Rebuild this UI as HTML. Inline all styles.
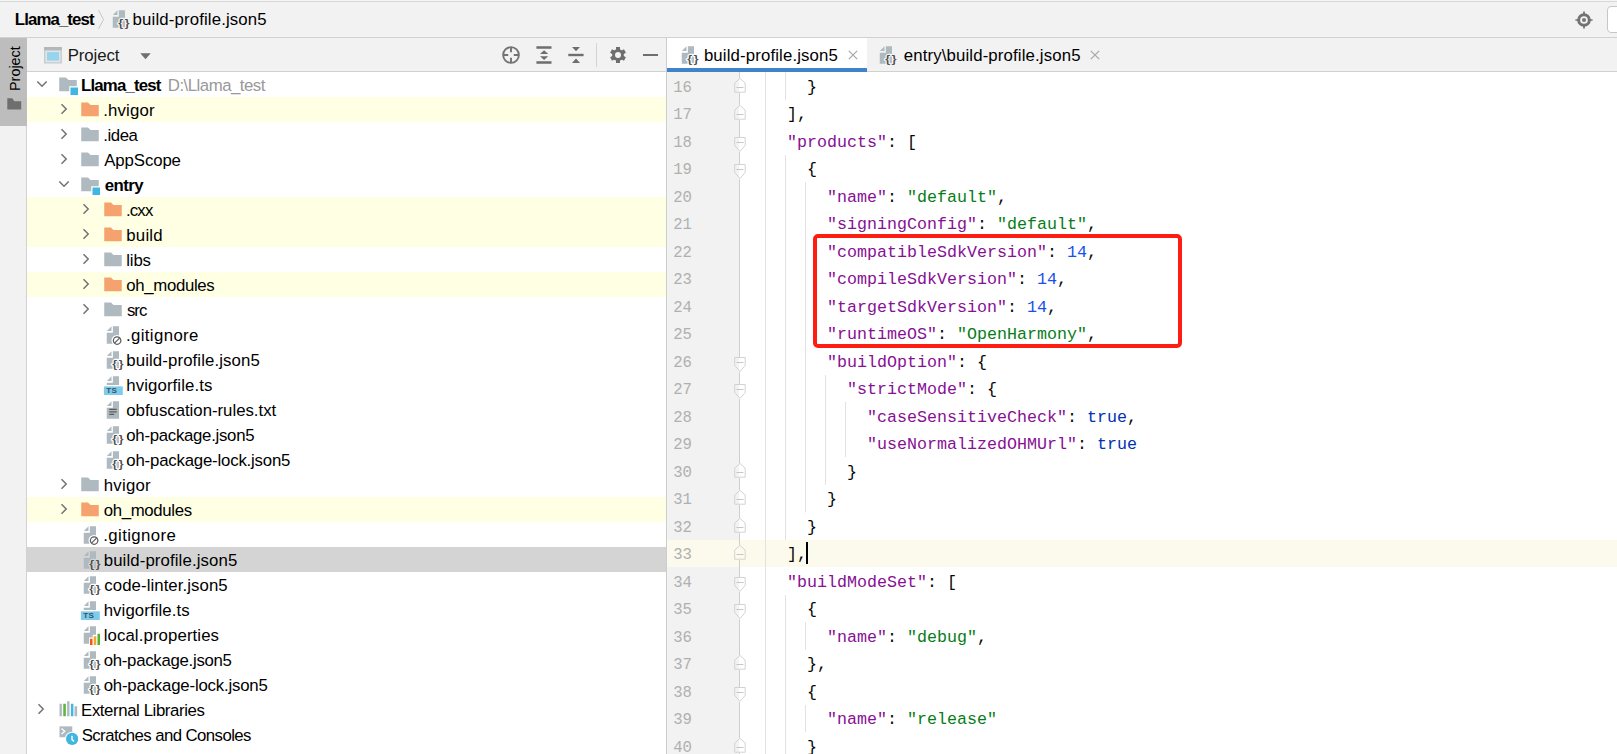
<!DOCTYPE html>
<html><head><meta charset="utf-8"><title>build-profile.json5</title>
<style>
html,body{margin:0;padding:0}
body{width:1617px;height:754px;overflow:hidden;position:relative;background:#fff;font-family:"Liberation Sans",sans-serif;color:#000}
.ab{position:absolute}
.rowbg{left:27px;width:639px;height:25px}
.tl{height:25px;line-height:25px;font-size:16.8px;white-space:pre;color:#000}
.b{font-weight:bold}
.ln{left:662px;width:30px;text-align:right;font:17px/27.5px "Liberation Mono",monospace;color:#b0b0b0;height:27.5px;transform:scaleX(.92);transform-origin:100% 50%}
.cl{font:16.667px/27.5px "Liberation Mono",monospace;white-space:pre;height:27.5px;color:#080808}
.k{color:#871094}.s{color:#067d17}.n{color:#1750eb}.w{color:#0033b3}
</style></head><body>
<!-- top nav bar -->
<div class="ab" style="left:0;top:0;width:1617px;height:38px;background:#f2f2f2"></div>
<div class="ab" style="left:0;top:0;width:1617px;height:1px;background:#f5f5f5"></div>
<div class="ab" style="left:0;top:1px;width:1617px;height:1px;background:#d8d8d8"></div>
<div class="ab" style="left:0;top:37px;width:1617px;height:1px;background:#d1d1d1"></div>
<div class="ab tl b" style="left:14.8px;top:6.7px;letter-spacing:-0.876px">Llama_test</div>
<svg class="ab" style="left:97px;top:9px" width="8" height="21" viewBox="0 0 8 21"><path d="M1.500 1l5 9.500-5 9.500" stroke="#c6c6c6" stroke-width="1" fill="none"/></svg>
<svg class="ab" style="left:108.8px;top:9.1px" width="22" height="22" viewBox="0 0 17.6 17.6"><path d="M7.900 1H12.800V15H3V6.200H7.900z" fill="#aeb9c0"/><path d="M6.800 1V4.700H3.100z" fill="#aeb9c0"/><g transform="translate(7.300 14.100) scale(1.250 1)"><text x="0" y="0" font-family="Liberation Sans, sans-serif" font-size="9.200" fill="#505050" stroke="#f2f2f2" stroke-width="2" stroke-linejoin="round" paint-order="stroke" letter-spacing="1.100">{}</text><text x="0" y="0" font-family="Liberation Sans, sans-serif" font-size="9.200" fill="#505050" letter-spacing="1.100">{}</text></g><ellipse cx="11.700" cy="11.300" rx="0.800" ry="2.300" fill="#b9c3c9"/></svg>
<div class="ab tl " style="left:132.6px;top:6.7px;letter-spacing:0.139px">build-profile.json5</div>
<svg class="ab" style="left:1573.900px;top:9.900px" width="20" height="20" viewBox="-10 -10 20 20"><circle r="5.350" fill="none" stroke="#737373" stroke-width="3"/><rect x="-1.800" y="-1.800" width="3.600" height="3.600" rx="0.800" fill="#737373"/><path d="M0 -8.600v3M0 5.600v3M-8.600 0h3M5.600 0h3" stroke="#737373" stroke-width="1.700"/></svg>
<div class="ab" style="left:1606.900px;top:6.100px;width:14px;height:24.600px;border:1.300px solid #c6c6c6;border-radius:4px;background:#fff"></div>

<!-- left strip -->
<div class="ab" style="left:0;top:38px;width:27px;height:716px;background:#f2f2f2"></div>
<div class="ab" style="left:26px;top:38px;width:1px;height:716px;background:#d1d1d1"></div>
<div class="ab" style="left:0;top:38px;width:26.600px;height:87.700px;background:#bdbdbd"></div>
<div class="ab" style="left:5px;top:90.600px;transform-origin:0 0;transform:rotate(-90deg);font-size:14.400px;line-height:20px;white-space:nowrap;letter-spacing:0.002px">Project</div>
<svg class="ab" style="left:7px;top:98px" width="15" height="12" viewBox="0 0 15 12"><path d="M.300 .300h5l2 3H14.200V11.600H.300z" fill="#6e6e6e"/></svg>

<!-- tool window header -->
<div class="ab" style="left:27px;top:38px;width:639px;height:33px;background:#f2f2f2"></div>
<div class="ab" style="left:27px;top:71px;width:639px;height:1px;background:#d1d1d1"></div>
<svg class="ab" style="left:44px;top:47.400px" width="19" height="17" viewBox="0 0 19 17"><rect x="0" y="0" width="17.900" height="16.500" fill="#c6cbd0"/><rect x="0" y="0" width="17.900" height="2.900" fill="#b0b8be"/><rect x="1.400" y="3.900" width="15.100" height="11.300" fill="#e2e6e9"/><rect x="3" y="5.100" width="12.100" height="8.500" fill="#98d4eb"/></svg>
<div class="ab tl " style="left:67.7px;top:43px;letter-spacing:-0.078px;color:#1a1a1a">Project</div>
<svg class="ab" style="left:139.500px;top:53px" width="12" height="7" viewBox="0 0 12 7"><path d="M.300 .300h10.400L5.500 6.300z" fill="#6e6e6e"/></svg>
<!-- toolbar icons -->
<svg class="ab" style="left:501px;top:44.850px" width="20" height="20" viewBox="0 0 20 20"><circle cx="10" cy="10" r="7.850" fill="none" stroke="#737373" stroke-width="1.900"/><path d="M10 2v5.200M10 12.800v5.200M2 10h5.200M12.800 10h5.200" stroke="#737373" stroke-width="1.900"/></svg>
<svg class="ab" style="left:534px;top:45px" width="20" height="20" viewBox="0 0 20 20"><path d="M2.400 2.500h15.100M2.400 17.500h15.100" stroke="#6e6e6e" stroke-width="2.500"/><path d="M6 9h8.200L10.100 5.200z M6 11.200h8.200l-4.100 3.700z" fill="#6e6e6e"/></svg>
<svg class="ab" style="left:566px;top:45px" width="20" height="20" viewBox="0 0 20 20"><path d="M2.300 10h15.300" stroke="#6e6e6e" stroke-width="2.400"/><path d="M6 2.100h8L10 6.300z M6 17.900h8L10 13.500z" fill="#6e6e6e"/></svg>
<div class="ab" style="left:596px;top:43px;width:1px;height:24px;background:#d3d3d3"></div>
<svg class="ab" style="left:608px;top:44.850px" width="20" height="20" viewBox="-10 -10 20 20"><g fill="#6e6e6e"><rect x="-2" y="-8" width="4" height="16"/><rect x="-2" y="-8" width="4" height="16" transform="rotate(60)"/><rect x="-2" y="-8" width="4" height="16" transform="rotate(120)"/></g><circle r="5.900" fill="#6e6e6e"/><circle r="3" fill="#f2f2f2"/></svg>
<div class="ab" style="left:642.700px;top:53.900px;width:15px;height:2.200px;background:#6e6e6e"></div>

<!-- tree -->
<svg class="ab" style="left:34.8px;top:79px" width="14" height="10" viewBox="-7 -5 14 10"><path d="M-4.700 -2.500L0 2.200 4.700-2.500" stroke="#727272" stroke-width="1.500" fill="none"/></svg>
<svg class="ab" style="left:57.7px;top:74.8px" width="20" height="20" viewBox="0 0 16 16"><path d="M1 2h5.4l2 2H15v9H1z" fill="#aeb9c0"/><rect x="9" y="9" width="7" height="7" fill="#fff"/><rect x="10" y="10" width="6" height="6" fill="#40b6e0"/></svg>
<div class="ab tl b" style="left:81.1px;top:73.1px;letter-spacing:-0.832px">Llama_test</div>
<div class="ab tl " style="left:167.8px;top:73.1px;letter-spacing:-0.497px;color:#999">D:\Llama_test</div>
<div class="ab rowbg" style="top:97px;background:#ffffe4"></div>
<svg class="ab" style="left:59px;top:102.3px" width="10" height="14" viewBox="-5 -7 10 14"><path d="M-2.500 -4.700L2.200 0-2.500 4.700" stroke="#727272" stroke-width="1.500" fill="none"/></svg>
<svg class="ab" style="left:80.3px;top:99.8px" width="20" height="20" viewBox="0 0 16 16"><path d="M1 2h5.4l2 2H15v9H1z" fill="#f5a26f"/></svg>
<div class="ab tl " style="left:103.3px;top:98.1px;letter-spacing:0.137px">.hvigor</div>
<svg class="ab" style="left:59px;top:127.3px" width="10" height="14" viewBox="-5 -7 10 14"><path d="M-2.500 -4.700L2.200 0-2.500 4.700" stroke="#727272" stroke-width="1.500" fill="none"/></svg>
<svg class="ab" style="left:80.3px;top:124.8px" width="20" height="20" viewBox="0 0 16 16"><path d="M1 2h5.4l2 2H15v9H1z" fill="#aeb9c0"/></svg>
<div class="ab tl " style="left:103.3px;top:123.1px;letter-spacing:-0.464px">.idea</div>
<svg class="ab" style="left:59px;top:152.3px" width="10" height="14" viewBox="-5 -7 10 14"><path d="M-2.500 -4.700L2.200 0-2.500 4.700" stroke="#727272" stroke-width="1.500" fill="none"/></svg>
<svg class="ab" style="left:80.3px;top:149.8px" width="20" height="20" viewBox="0 0 16 16"><path d="M1 2h5.4l2 2H15v9H1z" fill="#aeb9c0"/></svg>
<div class="ab tl " style="left:104.3px;top:148.1px;letter-spacing:-0.115px">AppScope</div>
<svg class="ab" style="left:57.4px;top:179px" width="14" height="10" viewBox="-7 -5 14 10"><path d="M-4.700 -2.500L0 2.200 4.700-2.500" stroke="#727272" stroke-width="1.500" fill="none"/></svg>
<svg class="ab" style="left:80.3px;top:174.8px" width="20" height="20" viewBox="0 0 16 16"><path d="M1 2h5.4l2 2H15v9H1z" fill="#aeb9c0"/><rect x="9" y="9" width="7" height="7" fill="#fff"/><rect x="10" y="10" width="6" height="6" fill="#40b6e0"/></svg>
<div class="ab tl b" style="left:104.7px;top:173.1px;letter-spacing:-0.526px">entry</div>
<div class="ab rowbg" style="top:197px;background:#ffffe4"></div>
<svg class="ab" style="left:80.9px;top:202.3px" width="10" height="14" viewBox="-5 -7 10 14"><path d="M-2.500 -4.700L2.200 0-2.500 4.700" stroke="#727272" stroke-width="1.500" fill="none"/></svg>
<svg class="ab" style="left:102.9px;top:199.8px" width="20" height="20" viewBox="0 0 16 16"><path d="M1 2h5.4l2 2H15v9H1z" fill="#f5a26f"/></svg>
<div class="ab tl " style="left:125.9px;top:198.1px;letter-spacing:-0.815px">.cxx</div>
<div class="ab rowbg" style="top:222px;background:#ffffe4"></div>
<svg class="ab" style="left:80.9px;top:227.3px" width="10" height="14" viewBox="-5 -7 10 14"><path d="M-2.500 -4.700L2.200 0-2.500 4.700" stroke="#727272" stroke-width="1.500" fill="none"/></svg>
<svg class="ab" style="left:102.9px;top:224.8px" width="20" height="20" viewBox="0 0 16 16"><path d="M1 2h5.4l2 2H15v9H1z" fill="#f5a26f"/></svg>
<div class="ab tl " style="left:126.3px;top:223.1px;letter-spacing:0.219px">build</div>
<svg class="ab" style="left:80.9px;top:252.3px" width="10" height="14" viewBox="-5 -7 10 14"><path d="M-2.500 -4.700L2.200 0-2.500 4.700" stroke="#727272" stroke-width="1.500" fill="none"/></svg>
<svg class="ab" style="left:102.9px;top:249.8px" width="20" height="20" viewBox="0 0 16 16"><path d="M1 2h5.4l2 2H15v9H1z" fill="#aeb9c0"/></svg>
<div class="ab tl " style="left:126.3px;top:248.1px;letter-spacing:-0.163px">libs</div>
<div class="ab rowbg" style="top:272px;background:#ffffe4"></div>
<svg class="ab" style="left:80.9px;top:277.3px" width="10" height="14" viewBox="-5 -7 10 14"><path d="M-2.500 -4.700L2.200 0-2.500 4.700" stroke="#727272" stroke-width="1.500" fill="none"/></svg>
<svg class="ab" style="left:102.9px;top:274.8px" width="20" height="20" viewBox="0 0 16 16"><path d="M1 2h5.4l2 2H15v9H1z" fill="#f5a26f"/></svg>
<div class="ab tl " style="left:126.3px;top:273.1px;letter-spacing:-0.338px">oh_modules</div>
<svg class="ab" style="left:80.9px;top:302.3px" width="10" height="14" viewBox="-5 -7 10 14"><path d="M-2.500 -4.700L2.200 0-2.500 4.700" stroke="#727272" stroke-width="1.500" fill="none"/></svg>
<svg class="ab" style="left:102.9px;top:299.8px" width="20" height="20" viewBox="0 0 16 16"><path d="M1 2h5.4l2 2H15v9H1z" fill="#aeb9c0"/></svg>
<div class="ab tl " style="left:126.9px;top:298.1px;letter-spacing:-0.989px">src</div>
<svg class="ab" style="left:102.9px;top:324.8px" width="20" height="20" viewBox="0 0 16 16"><path d="M7.900 1H12.800V15H3V6.200H7.900z" fill="#aeb9c0"/><path d="M6.800 1V4.700H3.100z" fill="#aeb9c0"/><circle cx="11.300" cy="12.400" r="4.500" fill="#fff"/><circle cx="11.300" cy="12.400" r="3" fill="none" stroke="#5a5a5a" stroke-width="1"/><path d="M9.200 14.500L13.400 10.300" stroke="#5a5a5a" stroke-width="1"/></svg>
<div class="ab tl " style="left:125.9px;top:323.1px;letter-spacing:0.389px">.gitignore</div>
<svg class="ab" style="left:102.9px;top:349.8px" width="22" height="22" viewBox="0 0 17.6 17.6"><path d="M7.900 1H12.800V15H3V6.200H7.900z" fill="#aeb9c0"/><path d="M6.800 1V4.700H3.100z" fill="#aeb9c0"/><g transform="translate(7.300 14.100) scale(1.250 1)"><text x="0" y="0" font-family="Liberation Sans, sans-serif" font-size="9.200" fill="#505050" stroke="#fff" stroke-width="2" stroke-linejoin="round" paint-order="stroke" letter-spacing="1.100">{}</text><text x="0" y="0" font-family="Liberation Sans, sans-serif" font-size="9.200" fill="#505050" letter-spacing="1.100">{}</text></g><ellipse cx="11.700" cy="11.300" rx="0.800" ry="2.300" fill="#b9c3c9"/></svg>
<div class="ab tl " style="left:126.3px;top:348.1px;letter-spacing:0.111px">build-profile.json5</div>
<svg class="ab" style="left:102.9px;top:374.8px" width="20" height="20" viewBox="0 0 16 16"><path d="M7.900 1H12.800V8H3V6.200H7.900z" fill="#aeb9c0"/><path d="M6.800 1V4.700H3.100z" fill="#aeb9c0"/><rect x="0.700" y="9.100" width="15.100" height="6.900" fill="#7fcbe9"/><text x="2.500" y="14.300" font-family="Liberation Sans, sans-serif" font-weight="bold" font-size="6.500" fill="#33576a" letter-spacing="0.300">TS</text></svg>
<div class="ab tl " style="left:126.3px;top:373.1px;letter-spacing:0.093px">hvigorfile.ts</div>
<svg class="ab" style="left:102.9px;top:399.8px" width="20" height="20" viewBox="0 0 16 16"><path d="M7.900 1H12.800V15H3V6.200H7.900z" fill="#aeb9c0"/><path d="M6.800 1V4.700H3.100z" fill="#aeb9c0"/><path d="M5 7.500h6M5 9.500h6M5 11.500h4" stroke="#5c5c5c" stroke-width="1"/></svg>
<div class="ab tl " style="left:126.3px;top:398.1px;letter-spacing:-0.015px">obfuscation-rules.txt</div>
<svg class="ab" style="left:102.9px;top:424.8px" width="22" height="22" viewBox="0 0 17.6 17.6"><path d="M7.900 1H12.800V15H3V6.200H7.900z" fill="#aeb9c0"/><path d="M6.800 1V4.700H3.100z" fill="#aeb9c0"/><g transform="translate(7.300 14.100) scale(1.250 1)"><text x="0" y="0" font-family="Liberation Sans, sans-serif" font-size="9.200" fill="#505050" stroke="#fff" stroke-width="2" stroke-linejoin="round" paint-order="stroke" letter-spacing="1.100">{}</text><text x="0" y="0" font-family="Liberation Sans, sans-serif" font-size="9.200" fill="#505050" letter-spacing="1.100">{}</text></g><ellipse cx="11.700" cy="11.300" rx="0.800" ry="2.300" fill="#b9c3c9"/></svg>
<div class="ab tl " style="left:126.3px;top:423.1px;letter-spacing:-0.283px">oh-package.json5</div>
<svg class="ab" style="left:102.9px;top:449.8px" width="22" height="22" viewBox="0 0 17.6 17.6"><path d="M7.900 1H12.800V15H3V6.200H7.900z" fill="#aeb9c0"/><path d="M6.800 1V4.700H3.100z" fill="#aeb9c0"/><g transform="translate(7.300 14.100) scale(1.250 1)"><text x="0" y="0" font-family="Liberation Sans, sans-serif" font-size="9.200" fill="#505050" stroke="#fff" stroke-width="2" stroke-linejoin="round" paint-order="stroke" letter-spacing="1.100">{}</text><text x="0" y="0" font-family="Liberation Sans, sans-serif" font-size="9.200" fill="#505050" letter-spacing="1.100">{}</text></g><ellipse cx="11.700" cy="11.300" rx="0.800" ry="2.300" fill="#b9c3c9"/></svg>
<div class="ab tl " style="left:126.3px;top:448.1px;letter-spacing:-0.189px">oh-package-lock.json5</div>
<svg class="ab" style="left:59px;top:477.3px" width="10" height="14" viewBox="-5 -7 10 14"><path d="M-2.500 -4.700L2.200 0-2.500 4.700" stroke="#727272" stroke-width="1.500" fill="none"/></svg>
<svg class="ab" style="left:80.3px;top:474.8px" width="20" height="20" viewBox="0 0 16 16"><path d="M1 2h5.4l2 2H15v9H1z" fill="#aeb9c0"/></svg>
<div class="ab tl " style="left:103.7px;top:473.1px;letter-spacing:0.256px">hvigor</div>
<div class="ab rowbg" style="top:497px;background:#ffffe4"></div>
<svg class="ab" style="left:59px;top:502.3px" width="10" height="14" viewBox="-5 -7 10 14"><path d="M-2.500 -4.700L2.200 0-2.500 4.700" stroke="#727272" stroke-width="1.500" fill="none"/></svg>
<svg class="ab" style="left:80.3px;top:499.8px" width="20" height="20" viewBox="0 0 16 16"><path d="M1 2h5.4l2 2H15v9H1z" fill="#f5a26f"/></svg>
<div class="ab tl " style="left:103.7px;top:498.1px;letter-spacing:-0.338px">oh_modules</div>
<svg class="ab" style="left:80.3px;top:524.8px" width="20" height="20" viewBox="0 0 16 16"><path d="M7.900 1H12.800V15H3V6.200H7.900z" fill="#aeb9c0"/><path d="M6.800 1V4.700H3.100z" fill="#aeb9c0"/><circle cx="11.300" cy="12.400" r="4.500" fill="#fff"/><circle cx="11.300" cy="12.400" r="3" fill="none" stroke="#5a5a5a" stroke-width="1"/><path d="M9.200 14.500L13.400 10.300" stroke="#5a5a5a" stroke-width="1"/></svg>
<div class="ab tl " style="left:103.3px;top:523.1px;letter-spacing:0.389px">.gitignore</div>
<div class="ab rowbg" style="top:547px;background:#d4d4d4"></div>
<svg class="ab" style="left:80.3px;top:549.8px" width="22" height="22" viewBox="0 0 17.6 17.6"><path d="M7.900 1H12.800V15H3V6.200H7.900z" fill="#aeb9c0"/><path d="M6.800 1V4.700H3.100z" fill="#aeb9c0"/><g transform="translate(7.300 14.100) scale(1.250 1)"><text x="0" y="0" font-family="Liberation Sans, sans-serif" font-size="9.200" fill="#505050" stroke="#d4d4d4" stroke-width="2" stroke-linejoin="round" paint-order="stroke" letter-spacing="1.100">{}</text><text x="0" y="0" font-family="Liberation Sans, sans-serif" font-size="9.200" fill="#505050" letter-spacing="1.100">{}</text></g><ellipse cx="11.700" cy="11.300" rx="0.800" ry="2.300" fill="#b9c3c9"/></svg>
<div class="ab tl " style="left:103.7px;top:548.1px;letter-spacing:0.111px">build-profile.json5</div>
<svg class="ab" style="left:80.3px;top:574.8px" width="22" height="22" viewBox="0 0 17.6 17.6"><path d="M7.900 1H12.800V15H3V6.200H7.900z" fill="#aeb9c0"/><path d="M6.800 1V4.700H3.100z" fill="#aeb9c0"/><g transform="translate(7.300 14.100) scale(1.250 1)"><text x="0" y="0" font-family="Liberation Sans, sans-serif" font-size="9.200" fill="#505050" stroke="#fff" stroke-width="2" stroke-linejoin="round" paint-order="stroke" letter-spacing="1.100">{}</text><text x="0" y="0" font-family="Liberation Sans, sans-serif" font-size="9.200" fill="#505050" letter-spacing="1.100">{}</text></g><ellipse cx="11.700" cy="11.300" rx="0.800" ry="2.300" fill="#b9c3c9"/></svg>
<div class="ab tl " style="left:104.3px;top:573.1px;letter-spacing:0.071px">code-linter.json5</div>
<svg class="ab" style="left:80.3px;top:599.8px" width="20" height="20" viewBox="0 0 16 16"><path d="M7.900 1H12.800V8H3V6.200H7.900z" fill="#aeb9c0"/><path d="M6.800 1V4.700H3.100z" fill="#aeb9c0"/><rect x="0.700" y="9.100" width="15.100" height="6.900" fill="#7fcbe9"/><text x="2.500" y="14.300" font-family="Liberation Sans, sans-serif" font-weight="bold" font-size="6.500" fill="#33576a" letter-spacing="0.300">TS</text></svg>
<div class="ab tl " style="left:103.7px;top:598.1px;letter-spacing:0.093px">hvigorfile.ts</div>
<svg class="ab" style="left:80.3px;top:624.8px" width="20" height="20" viewBox="0 0 16 16"><path d="M7.900 1H12.800V7.800H10.200V10H7.300V15H3V6.200H7.900z" fill="#aeb9c0"/><path d="M6.800 1V4.700H3.100z" fill="#aeb9c0"/><rect x="8" y="11" width="2" height="5" fill="#f0590e"/><rect x="11" y="9" width="2" height="7" fill="#f2a630"/><rect x="14" y="7" width="2" height="9" fill="#57b030"/></svg>
<div class="ab tl " style="left:103.7px;top:623.1px;letter-spacing:0.1px">local.properties</div>
<svg class="ab" style="left:80.3px;top:649.8px" width="22" height="22" viewBox="0 0 17.6 17.6"><path d="M7.900 1H12.800V15H3V6.200H7.900z" fill="#aeb9c0"/><path d="M6.800 1V4.700H3.100z" fill="#aeb9c0"/><g transform="translate(7.300 14.100) scale(1.250 1)"><text x="0" y="0" font-family="Liberation Sans, sans-serif" font-size="9.200" fill="#505050" stroke="#fff" stroke-width="2" stroke-linejoin="round" paint-order="stroke" letter-spacing="1.100">{}</text><text x="0" y="0" font-family="Liberation Sans, sans-serif" font-size="9.200" fill="#505050" letter-spacing="1.100">{}</text></g><ellipse cx="11.700" cy="11.300" rx="0.800" ry="2.300" fill="#b9c3c9"/></svg>
<div class="ab tl " style="left:103.7px;top:648.1px;letter-spacing:-0.283px">oh-package.json5</div>
<svg class="ab" style="left:80.3px;top:674.8px" width="22" height="22" viewBox="0 0 17.6 17.6"><path d="M7.900 1H12.800V15H3V6.200H7.900z" fill="#aeb9c0"/><path d="M6.800 1V4.700H3.100z" fill="#aeb9c0"/><g transform="translate(7.300 14.100) scale(1.250 1)"><text x="0" y="0" font-family="Liberation Sans, sans-serif" font-size="9.200" fill="#505050" stroke="#fff" stroke-width="2" stroke-linejoin="round" paint-order="stroke" letter-spacing="1.100">{}</text><text x="0" y="0" font-family="Liberation Sans, sans-serif" font-size="9.200" fill="#505050" letter-spacing="1.100">{}</text></g><ellipse cx="11.700" cy="11.300" rx="0.800" ry="2.300" fill="#b9c3c9"/></svg>
<div class="ab tl " style="left:103.7px;top:673.1px;letter-spacing:-0.189px">oh-package-lock.json5</div>
<svg class="ab" style="left:36.2px;top:702.3px" width="10" height="14" viewBox="-5 -7 10 14"><path d="M-2.500 -4.700L2.200 0-2.500 4.700" stroke="#727272" stroke-width="1.500" fill="none"/></svg>
<svg class="ab" style="left:57.7px;top:699.8px" width="20" height="20" viewBox="0 0 16 16"><rect x="1.200" y="3" width="1.900" height="10" fill="#aeb9c0"/><rect x="4.200" y="3" width="2.100" height="10" fill="#62b543"/><rect x="7.300" y="1" width="1.900" height="12" fill="#aeb9c0"/><rect x="10.300" y="3" width="2" height="10" fill="#40b6e0"/><rect x="13.200" y="5" width="2.100" height="8" fill="#aeb9c0"/></svg>
<div class="ab tl " style="left:81.1px;top:698.1px;letter-spacing:-0.405px">External Libraries</div>
<svg class="ab" style="left:57.7px;top:724.8px" width="20" height="20" viewBox="0 0 16 16"><path d="M1.200 1.100h10.200v8.700H1.200z" fill="#aeb9c0"/><path d="M2.800 2.800l2.600 2.200-2.600 2.200" stroke="#fff" stroke-width="1" fill="none"/><circle cx="11.300" cy="11.100" r="5.800" fill="#fff"/><circle cx="11.300" cy="11.100" r="4.900" fill="#40b6e0"/><path d="M11.200 8.500v3.200l1.700 1.500" stroke="#fff" stroke-width="1.100" fill="none"/></svg>
<div class="ab tl " style="left:81.7px;top:723.1px;letter-spacing:-0.577px">Scratches and Consoles</div>

<!-- divider -->
<div class="ab" style="left:666px;top:38px;width:1px;height:716px;background:#cdcdcd"></div>

<!-- editor tabs -->
<div class="ab" style="left:667px;top:38px;width:950px;height:33px;background:#f2f2f2"></div>
<div class="ab" style="left:667px;top:38px;width:200px;height:33px;background:#fff"></div>
<div class="ab" style="left:667px;top:71px;width:950px;height:1px;background:#d1d1d1"></div>
<div class="ab" style="left:667px;top:68px;width:200px;height:3.600px;background:#4083c9"></div>
<svg class="ab" style="left:678.2px;top:45.3px" width="22" height="22" viewBox="0 0 17.6 17.6"><path d="M7.900 1H12.800V15H3V6.200H7.900z" fill="#aeb9c0"/><path d="M6.800 1V4.700H3.100z" fill="#aeb9c0"/><g transform="translate(7.300 14.100) scale(1.250 1)"><text x="0" y="0" font-family="Liberation Sans, sans-serif" font-size="9.200" fill="#505050" stroke="#fff" stroke-width="2" stroke-linejoin="round" paint-order="stroke" letter-spacing="1.100">{}</text><text x="0" y="0" font-family="Liberation Sans, sans-serif" font-size="9.200" fill="#505050" letter-spacing="1.100">{}</text></g><ellipse cx="11.700" cy="11.300" rx="0.800" ry="2.300" fill="#b9c3c9"/></svg>
<div class="ab tl " style="left:703.9px;top:43.4px;letter-spacing:0.134px">build-profile.json5</div>
<svg class="ab" style="left:847px;top:49.200px" width="12" height="12" viewBox="0 0 12 12"><path d="M1.800 1.800l8.400 8.400M10.200 1.800l-8.400 8.400" stroke="#a6a6a6" stroke-width="1.200"/></svg>
<svg class="ab" style="left:876.1px;top:45.3px" width="22" height="22" viewBox="0 0 17.6 17.6"><path d="M7.900 1H12.800V15H3V6.200H7.900z" fill="#aeb9c0"/><path d="M6.800 1V4.700H3.100z" fill="#aeb9c0"/><g transform="translate(7.300 14.100) scale(1.250 1)"><text x="0" y="0" font-family="Liberation Sans, sans-serif" font-size="9.200" fill="#505050" stroke="#f2f2f2" stroke-width="2" stroke-linejoin="round" paint-order="stroke" letter-spacing="1.100">{}</text><text x="0" y="0" font-family="Liberation Sans, sans-serif" font-size="9.200" fill="#505050" letter-spacing="1.100">{}</text></g><ellipse cx="11.700" cy="11.300" rx="0.800" ry="2.300" fill="#b9c3c9"/></svg>
<div class="ab tl " style="left:903.7px;top:43.4px;letter-spacing:0.139px">entry\build-profile.json5</div>
<svg class="ab" style="left:1089px;top:49.200px" width="12" height="12" viewBox="0 0 12 12"><path d="M1.800 1.800l8.400 8.400M10.200 1.800l-8.400 8.400" stroke="#a6a6a6" stroke-width="1.200"/></svg>

<!-- editor -->
<div class="ab" style="left:667px;top:72px;width:72px;height:682px;background:#f2f2f2"></div>
<div class="ab" style="left:667px;top:540px;width:950px;height:27px;background:#fcfaed"></div>
<div class="ab" style="left:765px;top:72.25px;width:1px;height:687.5px;background:#e2e2e2"></div>
<div class="ab" style="left:785px;top:72.25px;width:1px;height:27.5px;background:#e2e2e2"></div>
<div class="ab" style="left:785px;top:154.75px;width:1px;height:385px;background:#e2e2e2"></div>
<div class="ab" style="left:785px;top:594.75px;width:1px;height:165px;background:#e2e2e2"></div>
<div class="ab" style="left:805px;top:182.25px;width:1px;height:330px;background:#e2e2e2"></div>
<div class="ab" style="left:825px;top:374.75px;width:1px;height:110px;background:#e2e2e2"></div>
<div class="ab" style="left:845px;top:402.25px;width:1px;height:55px;background:#e2e2e2"></div>
<div class="ab" style="left:805px;top:622.25px;width:1px;height:27.5px;background:#e2e2e2"></div>
<div class="ab" style="left:805px;top:704.75px;width:1px;height:27.5px;background:#e2e2e2"></div>
<div class="ab ln" style="top:73.55px">16</div>
<div class="ab cl" style="left:807px;top:73.55px">}</div>
<svg class="ab" style="left:733px;top:76px" width="14" height="18" viewBox="0 0 14 18"><path d="M1.700 16.200V7.100L6.950 2.400l5.250 4.700V16.200z" fill="none" stroke="#d2d2d2" stroke-width="1"/><path d="M3.400 11.500h7.100" stroke="#c6c6c6" stroke-width="1"/></svg>
<div class="ab ln" style="top:101.05px">17</div>
<div class="ab cl" style="left:787px;top:101.05px">],</div>
<svg class="ab" style="left:733px;top:103px" width="14" height="18" viewBox="0 0 14 18"><path d="M1.700 16.200V7.100L6.950 2.400l5.250 4.700V16.200z" fill="none" stroke="#d2d2d2" stroke-width="1"/><path d="M3.400 11.500h7.100" stroke="#c6c6c6" stroke-width="1"/></svg>
<div class="ab ln" style="top:128.55px">18</div>
<div class="ab cl" style="left:787px;top:128.55px"><span class="k">"products"</span>: [</div>
<svg class="ab" style="left:733px;top:135px" width="14" height="18" viewBox="0 0 14 18"><path d="M1.700 2.500H12.200V10.500L6.950 16.400 1.700 10.500z" fill="none" stroke="#d2d2d2" stroke-width="1"/><path d="M3.400 7.500h7.100" stroke="#c6c6c6" stroke-width="1"/></svg>
<div class="ab ln" style="top:156.05px">19</div>
<div class="ab cl" style="left:807px;top:156.05px">{</div>
<svg class="ab" style="left:733px;top:162px" width="14" height="18" viewBox="0 0 14 18"><path d="M1.700 2.500H12.200V10.500L6.950 16.400 1.700 10.500z" fill="none" stroke="#d2d2d2" stroke-width="1"/><path d="M3.400 7.500h7.100" stroke="#c6c6c6" stroke-width="1"/></svg>
<div class="ab ln" style="top:183.55px">20</div>
<div class="ab cl" style="left:827px;top:183.55px"><span class="k">"name"</span>: <span class="s">"default"</span>,</div>
<div class="ab ln" style="top:211.05px">21</div>
<div class="ab cl" style="left:827px;top:211.05px"><span class="k">"signingConfig"</span>: <span class="s">"default"</span>,</div>
<div class="ab ln" style="top:238.55px">22</div>
<div class="ab cl" style="left:827px;top:238.55px"><span class="k">"compatibleSdkVersion"</span>: <span class="n">14</span>,</div>
<div class="ab ln" style="top:266.05px">23</div>
<div class="ab cl" style="left:827px;top:266.05px"><span class="k">"compileSdkVersion"</span>: <span class="n">14</span>,</div>
<div class="ab ln" style="top:293.55px">24</div>
<div class="ab cl" style="left:827px;top:293.55px"><span class="k">"targetSdkVersion"</span>: <span class="n">14</span>,</div>
<div class="ab ln" style="top:321.05px">25</div>
<div class="ab cl" style="left:827px;top:321.05px"><span class="k">"runtimeOS"</span>: <span class="s">"OpenHarmony"</span>,</div>
<div class="ab ln" style="top:348.55px">26</div>
<div class="ab cl" style="left:827px;top:348.55px"><span class="k">"buildOption"</span>: {</div>
<svg class="ab" style="left:733px;top:355px" width="14" height="18" viewBox="0 0 14 18"><path d="M1.700 2.500H12.200V10.500L6.950 16.400 1.700 10.500z" fill="none" stroke="#d2d2d2" stroke-width="1"/><path d="M3.400 7.500h7.100" stroke="#c6c6c6" stroke-width="1"/></svg>
<div class="ab ln" style="top:376.05px">27</div>
<div class="ab cl" style="left:847px;top:376.05px"><span class="k">"strictMode"</span>: {</div>
<svg class="ab" style="left:733px;top:382px" width="14" height="18" viewBox="0 0 14 18"><path d="M1.700 2.500H12.200V10.500L6.950 16.400 1.700 10.500z" fill="none" stroke="#d2d2d2" stroke-width="1"/><path d="M3.400 7.500h7.100" stroke="#c6c6c6" stroke-width="1"/></svg>
<div class="ab ln" style="top:403.55px">28</div>
<div class="ab cl" style="left:867px;top:403.55px"><span class="k">"caseSensitiveCheck"</span>: <span class="w">true</span>,</div>
<div class="ab ln" style="top:431.05px">29</div>
<div class="ab cl" style="left:867px;top:431.05px"><span class="k">"useNormalizedOHMUrl"</span>: <span class="w">true</span></div>
<div class="ab ln" style="top:458.55px">30</div>
<div class="ab cl" style="left:847px;top:458.55px">}</div>
<svg class="ab" style="left:733px;top:461px" width="14" height="18" viewBox="0 0 14 18"><path d="M1.700 16.200V7.100L6.950 2.400l5.250 4.700V16.200z" fill="none" stroke="#d2d2d2" stroke-width="1"/><path d="M3.400 11.500h7.100" stroke="#c6c6c6" stroke-width="1"/></svg>
<div class="ab ln" style="top:486.05px">31</div>
<div class="ab cl" style="left:827px;top:486.05px">}</div>
<svg class="ab" style="left:733px;top:488px" width="14" height="18" viewBox="0 0 14 18"><path d="M1.700 16.200V7.100L6.950 2.400l5.250 4.700V16.200z" fill="none" stroke="#d2d2d2" stroke-width="1"/><path d="M3.400 11.500h7.100" stroke="#c6c6c6" stroke-width="1"/></svg>
<div class="ab ln" style="top:513.55px">32</div>
<div class="ab cl" style="left:807px;top:513.55px">}</div>
<svg class="ab" style="left:733px;top:516px" width="14" height="18" viewBox="0 0 14 18"><path d="M1.700 16.200V7.100L6.950 2.400l5.250 4.700V16.200z" fill="none" stroke="#d2d2d2" stroke-width="1"/><path d="M3.400 11.500h7.100" stroke="#c6c6c6" stroke-width="1"/></svg>
<div class="ab ln" style="top:541.05px">33</div>
<div class="ab cl" style="left:787px;top:541.05px">],</div>
<svg class="ab" style="left:733px;top:543px" width="14" height="18" viewBox="0 0 14 18"><path d="M1.700 16.200V7.100L6.950 2.400l5.250 4.700V16.200z" fill="none" stroke="#d2d2d2" stroke-width="1"/><path d="M3.400 11.500h7.100" stroke="#c6c6c6" stroke-width="1"/></svg>
<div class="ab ln" style="top:568.55px">34</div>
<div class="ab cl" style="left:787px;top:568.55px"><span class="k">"buildModeSet"</span>: [</div>
<svg class="ab" style="left:733px;top:575px" width="14" height="18" viewBox="0 0 14 18"><path d="M1.700 2.500H12.200V10.500L6.950 16.400 1.700 10.500z" fill="none" stroke="#d2d2d2" stroke-width="1"/><path d="M3.400 7.500h7.100" stroke="#c6c6c6" stroke-width="1"/></svg>
<div class="ab ln" style="top:596.05px">35</div>
<div class="ab cl" style="left:807px;top:596.05px">{</div>
<svg class="ab" style="left:733px;top:602px" width="14" height="18" viewBox="0 0 14 18"><path d="M1.700 2.500H12.200V10.500L6.950 16.400 1.700 10.500z" fill="none" stroke="#d2d2d2" stroke-width="1"/><path d="M3.400 7.500h7.100" stroke="#c6c6c6" stroke-width="1"/></svg>
<div class="ab ln" style="top:623.55px">36</div>
<div class="ab cl" style="left:827px;top:623.55px"><span class="k">"name"</span>: <span class="s">"debug"</span>,</div>
<div class="ab ln" style="top:651.05px">37</div>
<div class="ab cl" style="left:807px;top:651.05px">},</div>
<svg class="ab" style="left:733px;top:653px" width="14" height="18" viewBox="0 0 14 18"><path d="M1.700 16.200V7.100L6.950 2.400l5.250 4.700V16.200z" fill="none" stroke="#d2d2d2" stroke-width="1"/><path d="M3.400 11.500h7.100" stroke="#c6c6c6" stroke-width="1"/></svg>
<div class="ab ln" style="top:678.55px">38</div>
<div class="ab cl" style="left:807px;top:678.55px">{</div>
<svg class="ab" style="left:733px;top:685px" width="14" height="18" viewBox="0 0 14 18"><path d="M1.700 2.500H12.200V10.500L6.950 16.400 1.700 10.500z" fill="none" stroke="#d2d2d2" stroke-width="1"/><path d="M3.400 7.500h7.100" stroke="#c6c6c6" stroke-width="1"/></svg>
<div class="ab ln" style="top:706.05px">39</div>
<div class="ab cl" style="left:827px;top:706.05px"><span class="k">"name"</span>: <span class="s">"release"</span></div>
<div class="ab ln" style="top:733.55px">40</div>
<div class="ab cl" style="left:807px;top:733.55px">}</div>
<svg class="ab" style="left:733px;top:736px" width="14" height="18" viewBox="0 0 14 18"><path d="M1.700 16.200V7.100L6.950 2.400l5.250 4.700V16.200z" fill="none" stroke="#d2d2d2" stroke-width="1"/><path d="M3.400 11.500h7.100" stroke="#c6c6c6" stroke-width="1"/></svg>
<div class="ab" style="left:739px;top:72px;width:1px;height:6.3px;background:#cfcfcf"></div>
<div class="ab" style="left:739px;top:92.7px;width:1px;height:12.6px;background:#cfcfcf"></div>
<div class="ab" style="left:739px;top:119.7px;width:1px;height:17.3px;background:#cfcfcf"></div>
<div class="ab" style="left:739px;top:151.6px;width:1px;height:12.4px;background:#cfcfcf"></div>
<div class="ab" style="left:739px;top:178.6px;width:1px;height:178.4px;background:#cfcfcf"></div>
<div class="ab" style="left:739px;top:371.6px;width:1px;height:12.4px;background:#cfcfcf"></div>
<div class="ab" style="left:739px;top:398.6px;width:1px;height:64.7px;background:#cfcfcf"></div>
<div class="ab" style="left:739px;top:477.7px;width:1px;height:12.6px;background:#cfcfcf"></div>
<div class="ab" style="left:739px;top:504.7px;width:1px;height:13.6px;background:#cfcfcf"></div>
<div class="ab" style="left:739px;top:532.7px;width:1px;height:12.6px;background:#cfcfcf"></div>
<div class="ab" style="left:739px;top:559.7px;width:1px;height:17.3px;background:#cfcfcf"></div>
<div class="ab" style="left:739px;top:591.6px;width:1px;height:12.4px;background:#cfcfcf"></div>
<div class="ab" style="left:739px;top:618.6px;width:1px;height:36.7px;background:#cfcfcf"></div>
<div class="ab" style="left:739px;top:669.7px;width:1px;height:17.3px;background:#cfcfcf"></div>
<div class="ab" style="left:739px;top:701.6px;width:1px;height:36.7px;background:#cfcfcf"></div>
<div class="ab" style="left:739px;top:752.7px;width:1px;height:1.3px;background:#cfcfcf"></div>
<!-- caret -->
<div class="ab" style="left:806px;top:542.300px;width:2px;height:22.200px;background:#000"></div>
<!-- red annotation box -->
<div class="ab" style="left:813px;top:234px;width:361px;height:106px;border:4px solid #fd1d12;border-radius:5px"></div>
</body></html>
